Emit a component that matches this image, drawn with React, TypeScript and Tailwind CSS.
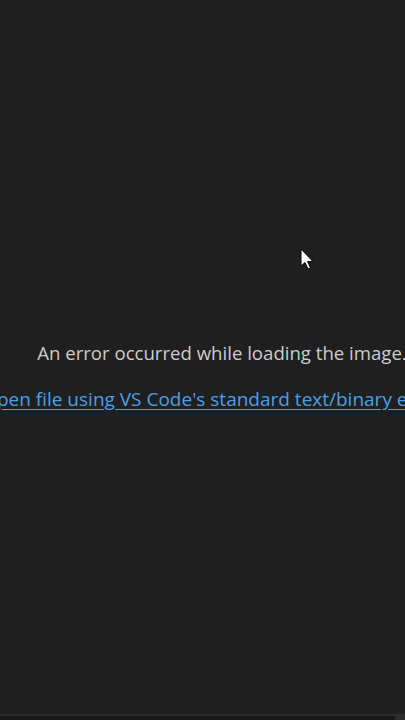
import React from 'react';

const Cursor: React.FC = () => (
  <svg
    className="absolute left-[300px] top-[248px]"
    width="16"
    height="24"
    viewBox="0 0 16 24"
  >
    <path
      d="M1 1 L1 18 L5 14.5 L8 21 L10.5 20 L7.6 13.6 L13 13.6 Z"
      fill="#ffffff"
      stroke="#000000"
      strokeWidth="1"
      strokeLinejoin="round"
    />
  </svg>
);

export default function App() {
  return (
    <div
      className="relative w-[405px] h-[720px] overflow-hidden bg-[#1f1f1f] flex flex-col"
      style={{ fontFamily: '"Open Sans", "Noto Sans", sans-serif' }}
    >
      <div className="flex-1 flex flex-col items-center pt-[337px] w-[444px]">
        <p className="whitespace-nowrap text-[18.6px] leading-[32px] text-[#cccccc]">
          An error occurred while loading the image.
        </p>
        <a
          href="#"
          className="mt-[14px] mr-[12px] whitespace-nowrap text-[19px] leading-[32px] text-[#4c9fe6] underline underline-offset-[3px]"
        >
          Open file using VS Code&apos;s standard text/binary editor
        </a>
      </div>
      <div className="h-[2px] bg-[#2b2b2b] shrink-0" />
      <div className="h-[4px] bg-[#181818] shrink-0 flex justify-end">
        <div className="w-[10px] bg-[#2b2b2b]" />
      </div>
      <Cursor />
    </div>
  );
}
